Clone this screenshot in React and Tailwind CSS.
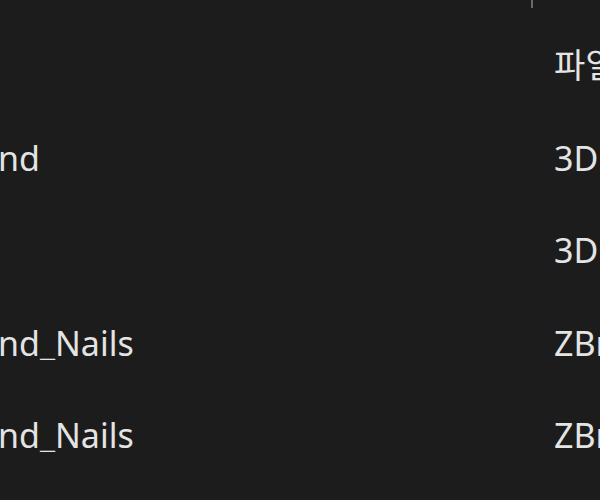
const ROWS = [
  { name: "", type: "파일 폴더" },
  { name: "nd", type: "3D Object" },
  { name: "", type: "3D Object" },
  { name: "nd_Nails", type: "ZBrush Document" },
  { name: "nd_Nails", type: "ZBrush Document" },
];

export default function App() {
  return (
    <div
      className="w-[600px] h-[500px] overflow-hidden bg-[#1c1c1c] text-[#e4e4e4]"
      style={{ fontFamily: '"Noto Sans", "Noto Sans CJK KR", sans-serif' }}
    >
      {/* header strip with column divider */}
      <div className="h-[19px] flex">
        <div className="w-[531px]" />
        <div className="w-[2px] h-[8px] bg-[#6a6a6a]" />
      </div>

      {ROWS.map((r, i) => (
        <div key={i} className="grid grid-cols-[554px_1fr] h-[92.5px] items-center text-[34px] leading-none whitespace-nowrap">
          <div className="overflow-hidden">
            <span className="block -ml-[2px]">{r.name}</span>
          </div>
          <div className="overflow-hidden">{r.type}</div>
        </div>
      ))}
    </div>
  );
}
